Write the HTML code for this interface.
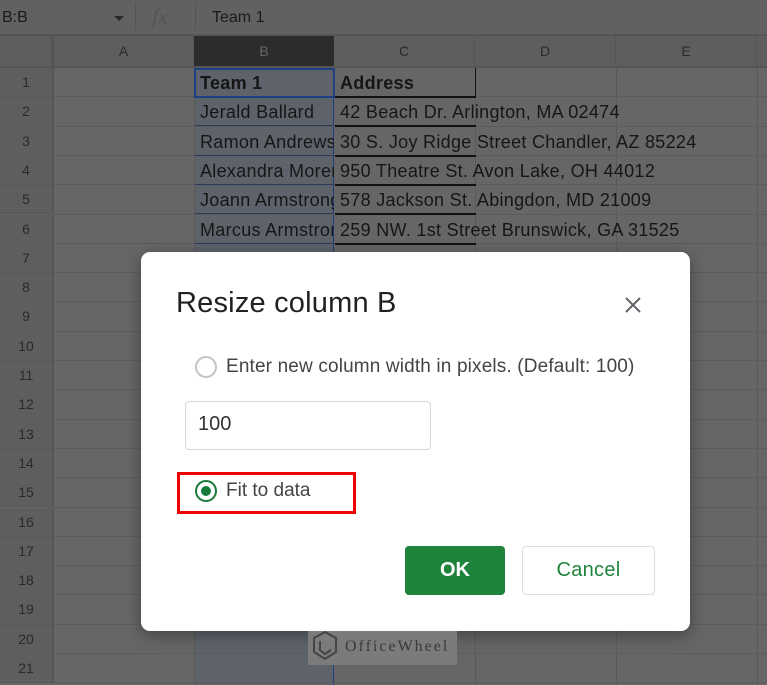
<!DOCTYPE html>
<html><head><meta charset="utf-8"><style>
*{margin:0;padding:0;box-sizing:border-box}
body{width:767px;height:685px;overflow:hidden;background:#666;font-family:"Liberation Sans",Arial,sans-serif;position:relative}
.a{position:absolute}
.fb{left:0;top:0;width:767px;height:36px;background:#616161;border-bottom:2px solid #555}
.hdr{top:36px;height:32px;background:#5e5e5e;border-bottom:2px solid #555;font-size:14px;color:#2a2a2a;text-align:center;line-height:30px}
.rh{left:0;width:54px;background:#5e5e5e;border-right:2px solid #555;border-bottom:1px solid #595959;font-size:14px;color:#2a2a2a;text-align:center}
.vl{top:68px;width:1px;height:617px;background:#5a5a5a}
.hl{left:54px;width:713px;height:1px;background:#5c5c5c}
.cell{font-size:18px;letter-spacing:.3px;color:#161616;white-space:nowrap;overflow:hidden;padding-left:5px;line-height:31px}
</style></head><body>
<div class="a fb"></div>
<div class="a" style="left:2px;top:9px;font-size:16px;color:#1a1a1a">B:B</div>
<div class="a" style="left:114px;top:16px;width:0;height:0;border-left:5px solid transparent;border-right:5px solid transparent;border-top:5px solid #2a2a2a"></div>
<div class="a" style="left:135px;top:3px;width:1px;height:28px;background:#555"></div>
<div class="a" style="left:152px;top:4px;font-family:'Liberation Serif',serif;font-style:italic;font-size:22px;color:#555">fx</div>
<div class="a" style="left:195px;top:3px;width:1px;height:28px;background:#555"></div>
<div class="a" style="left:212px;top:9px;font-size:16px;color:#1a1a1a">Team 1</div>

<div class="a hdr" style="left:0;width:54px;border-right:3px solid #555"></div>
<div class="a hdr" style="left:54px;width:140px;border-right:1px solid #555">A</div>
<div class="a hdr" style="left:194px;width:140px;background:#2c2c2c;color:#666">B</div>
<div class="a hdr" style="left:334px;width:141px;border-right:1px solid #555">C</div>
<div class="a hdr" style="left:475px;width:141px;border-right:1px solid #555">D</div>
<div class="a hdr" style="left:616px;width:141px;border-right:1px solid #555">E</div>
<div class="a hdr" style="left:757px;width:10px"></div>

<div class="a" style="left:194px;top:68px;width:140px;height:617px;background:#5e636b;border-left:1px solid #1e3f80;border-right:1px solid #1e3f80"></div>
<div class="a vl" style="left:194px"></div><div class="a vl" style="left:475px"></div><div class="a vl" style="left:616px"></div><div class="a vl" style="left:757px"></div>

<div id="rows"></div>
<script>
var h='';var d=[["Team 1","Address"],["Jerald Ballard","42 Beach Dr. Arlington, MA 02474"],["Ramon Andrews","30 S. Joy Ridge Street Chandler, AZ 85224"],["Alexandra Moreno","950 Theatre St. Avon Lake, OH 44012"],["Joann Armstrong","578 Jackson St. Abingdon, MD 21009"],["Marcus Armstrong","259 NW. 1st Street Brunswick, GA 31525"]];
for(var i=0;i<21;i++){var t=68+i*29.3;
h+='<div class="a rh" style="top:'+t+'px;height:29.3px;line-height:29px">'+(i+1)+'</div>';
h+='<div class="a hl" style="top:'+(t+28.3)+'px"></div>';
if(i<6){var b=i==0?'font-weight:bold;':'';
h+='<div class="a cell" style="left:195px;top:'+t+'px;width:139px;height:29.3px;'+b+'">'+d[i][0]+'</div>';
h+='<div class="a cell" style="left:335px;top:'+t+'px;width:430px;height:29.3px;'+b+'">'+d[i][1]+'</div>';
h+='<div class="a" style="left:335px;top:'+(t+28)+'px;width:141px;height:2px;background:#111"></div>';
h+='<div class="a" style="left:195px;top:'+(t+28)+'px;width:139px;height:1px;background:#2a3a60"></div>';}}
h+='<div class="a" style="left:475px;top:68px;width:1px;height:30px;background:#111"></div>';
h+='<div class="a" style="left:194px;top:68px;width:141px;height:30px;border:2px solid #1e3f80"></div>';
document.getElementById('rows').innerHTML=h;
</script>

<div class="a" style="left:141px;top:252px;width:549px;height:379px;background:#fff;border-radius:9px;box-shadow:0 4px 16px rgba(0,0,0,.35)"></div>
<div class="a" style="left:176px;top:287px;font-size:29px;letter-spacing:.2px;color:#202124">Resize column B</div>
<svg class="a" style="left:624px;top:296px" width="18" height="18" viewBox="0 0 18 18"><path d="M2 2L16 16M16 2L2 16" stroke="#5f6368" stroke-width="2"/></svg>
<div class="a" style="left:195px;top:356px;width:22px;height:22px;border:2px solid #c4c4c4;border-radius:50%"></div>
<div class="a" style="left:226px;top:356px;font-size:19px;letter-spacing:.15px;color:#444">Enter new column width in pixels. (Default: 100)</div>
<div class="a" style="left:185px;top:401px;width:246px;height:49px;border:1px solid #d6d6d6;border-radius:4px"></div>
<div class="a" style="left:198px;top:413px;font-size:20px;color:#333">100</div>
<div class="a" style="left:177px;top:472px;width:179px;height:42px;border:3px solid #ee0000"></div>
<div class="a" style="left:195px;top:480px;width:22px;height:22px;border:2px solid #187a3a;border-radius:50%"></div>
<div class="a" style="left:201px;top:486px;width:10px;height:10px;background:#187a3a;border-radius:50%"></div>
<div class="a" style="left:226px;top:480px;font-size:19px;color:#444">Fit to data</div>
<div class="a" style="left:405px;top:546px;width:100px;height:49px;background:#1e843c;border-radius:4px;color:#fff;font-size:20px;font-weight:bold;text-align:center;line-height:49px">OK</div>
<div class="a" style="left:522px;top:546px;width:133px;height:49px;border:1px solid #dadce0;border-radius:4px;color:#1e843c;font-size:20px;letter-spacing:.3px;text-align:center;line-height:47px">Cancel</div>

<div class="a" style="left:308px;top:631px;width:149px;height:34px;background:#7b7b7b"></div>
<svg class="a" style="left:312px;top:630px" width="26" height="32" viewBox="0 0 26 32"><path d="M13 2L24 8V22L13 29L2 22V8Z M8 11V20L13 24L19 20" fill="none" stroke="#444" stroke-width="2"/></svg>
<div class="a" style="left:345px;top:638px;font-family:'Liberation Serif',serif;font-size:16px;letter-spacing:2px;color:#3a3a3a">OfficeWheel</div>
</body></html>
